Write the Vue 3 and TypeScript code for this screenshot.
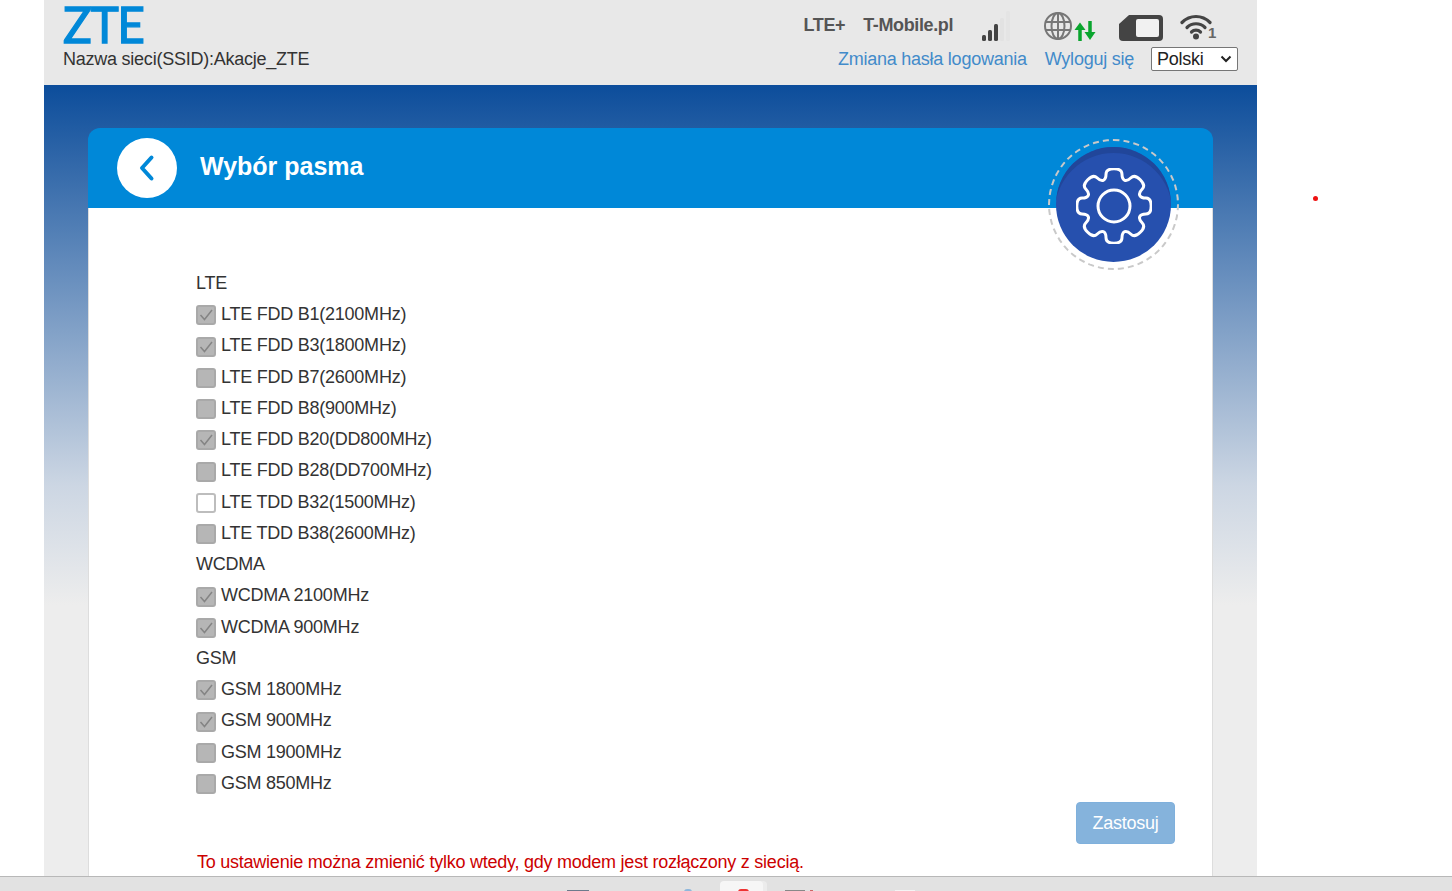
<script setup lang="ts">
interface Row { label: string; kind: 'head' | 'on' | 'off' | 'free' }
const rows: Row[] = [
  { label: 'LTE', kind: 'head' },
  { label: 'LTE FDD B1(2100MHz)', kind: 'on' },
  { label: 'LTE FDD B3(1800MHz)', kind: 'on' },
  { label: 'LTE FDD B7(2600MHz)', kind: 'off' },
  { label: 'LTE FDD B8(900MHz)', kind: 'off' },
  { label: 'LTE FDD B20(DD800MHz)', kind: 'on' },
  { label: 'LTE FDD B28(DD700MHz)', kind: 'off' },
  { label: 'LTE TDD B32(1500MHz)', kind: 'free' },
  { label: 'LTE TDD B38(2600MHz)', kind: 'off' },
  { label: 'WCDMA', kind: 'head' },
  { label: 'WCDMA 2100MHz', kind: 'on' },
  { label: 'WCDMA 900MHz', kind: 'on' },
  { label: 'GSM', kind: 'head' },
  { label: 'GSM 1800MHz', kind: 'on' },
  { label: 'GSM 900MHz', kind: 'on' },
  { label: 'GSM 1900MHz', kind: 'off' },
  { label: 'GSM 850MHz', kind: 'off' },
]

// Eight rounded teeth, one pointing straight up, smoothed through edge midpoints.
function gearPath(): string {
  const pts: [number, number][] = []
  for (let i = 0; i < 8; i++) {
    const a = -Math.PI / 2 + (i * Math.PI) / 4
    const add = (r: number, d: number) => pts.push([38 + r * Math.cos(a + d), 38 + r * Math.sin(a + d)])
    add(28, -0.29)
    add(38, -0.21)
    add(38, 0.21)
    add(28, 0.29)
  }
  const mid = (p: [number, number], q: [number, number]) => [(p[0] + q[0]) / 2, (p[1] + q[1]) / 2]
  const n = pts.length
  const start = mid(pts[n - 1], pts[0])
  let d = `M${start[0].toFixed(2)} ${start[1].toFixed(2)}`
  for (let i = 0; i < n; i++) {
    const m = mid(pts[i], pts[(i + 1) % n])
    d += `Q${pts[i][0].toFixed(2)} ${pts[i][1].toFixed(2)} ${m[0].toFixed(2)} ${m[1].toFixed(2)}`
  }
  return d + 'Z'
}
const gear = gearPath()
</script>

<template>
  <div class="page">
    <div class="shell">
      <header class="top">
        <div class="brand">
          <div class="logo">ZTE</div>
          <div class="ssid">Nazwa sieci(SSID):Akacje_ZTE</div>
        </div>
        <div class="status">
          <div class="status-line">
            <span class="net net-type">LTE+</span>
            <span class="net net-name">T-Mobile.pl</span>
            <svg class="ico-signal" width="32" height="32" viewBox="0 0 32 32">
              <rect x="1" y="24" width="4" height="6" rx="1.5" fill="#444" />
              <rect x="7" y="19" width="4" height="11" rx="1.5" fill="#444" />
              <rect x="13" y="13" width="4" height="17" rx="1.5" fill="#444" />
              <rect x="19" y="7" width="4" height="23" rx="1.5" fill="#e2e2e2" />
              <rect x="25" y="0" width="4" height="30" rx="1.5" fill="#e4e4e4" />
            </svg>
            <svg class="ico-globe" width="54" height="30" viewBox="0 0 54 30">
              <g fill="none" stroke="#777" stroke-width="2">
                <circle cx="15" cy="14" r="13" />
                <ellipse cx="15" cy="14" rx="6.5" ry="13" />
                <path d="M15 1v26M2.500 10h25M2.500 18h25" />
              </g>
              <path d="M37 29V15" fill="none" stroke="#0aa52e" stroke-width="3.500" />
              <path d="M31.500 18 37 10.500 42.500 18z" fill="#0aa52e" />
              <path d="M47 9v14" fill="none" stroke="#0aa52e" stroke-width="3.500" />
              <path d="M41.500 20 47 28 52.500 20z" fill="#0aa52e" />
            </svg>
            <svg class="ico-sim" width="46" height="28" viewBox="0 0 46 28">
              <path d="M11 1h30a4 4 0 0 1 4 4v18a4 4 0 0 1-4 4H5a4 4 0 0 1-4-4V10z" fill="#444" />
              <rect x="18" y="5" width="23" height="18" rx="2" fill="#f1f1f1" />
            </svg>
            <svg class="ico-wifi" width="38" height="28" viewBox="0 0 38 28">
              <g fill="none" stroke="#444" stroke-width="3.200" stroke-linecap="round">
                <path d="M2 9.500C10 1.500 22 1.500 30 9.500" />
                <path d="M7 14.500C12 9.500 20 9.500 25 14.500" />
                <path d="M11.500 19C14 16.500 18 16.500 20.500 19" />
              </g>
              <circle cx="16" cy="23.500" r="3" fill="#444" />
              <text x="28" y="25" class="wifi-count">1</text>
            </svg>
          </div>
          <div class="link-line">
            <a class="link link-first">Zmiana hasła logowania</a>
            <a class="link">Wyloguj się</a>
            <div class="lang">
              <span>Polski</span>
              <svg width="12" height="8" viewBox="0 0 12 8"><path d="M1.500 1.500 6 6l4.500-4.500" fill="none" stroke="#222" stroke-width="2" /></svg>
            </div>
          </div>
        </div>
      </header>

      <main class="stage">
        <section class="card">
          <div class="card-head">
            <div class="back">
              <svg width="18" height="28" viewBox="0 0 18 28"><path d="M13.500 3.500 4 14l9.500 10.500" fill="none" stroke="#0088d8" stroke-width="4" stroke-linecap="round" stroke-linejoin="round" /></svg>
            </div>
            <h1 class="title">Wybór pasma</h1>
          </div>
          <div class="badge">
            <div class="badge-disc">
              <svg class="gear" width="76" height="76" viewBox="0 0 76 76">
                <g fill="none" stroke="#fff" stroke-width="3" stroke-linejoin="round">
                  <path :d="gear" />
                  <circle cx="38" cy="38" r="16" />
                </g>
              </svg>
            </div>
          </div>
          <div class="card-body">
            <div class="bands">
              <div v-for="row in rows" :key="row.label" class="band">
                <span v-if="row.kind !== 'head'" class="box" :class="'box-' + row.kind">
                  <svg v-if="row.kind === 'on'" width="16" height="16" viewBox="0 0 16 16"><path d="M2.500 8 6.500 12.500 14 3" fill="none" stroke="#848484" stroke-width="1.500" /></svg>
                </span>
                <span>{{ row.label }}</span>
              </div>
            </div>
            <div class="actions"><button class="apply">Zastosuj</button></div>
            <p class="note">To ustawienie można zmienić tylko wtedy, gdy modem jest rozłączony z siecią.</p>
          </div>
        </section>
      </main>
    </div>
    <span class="dot"></span>
    <div class="taskbar">
      <span class="tb tb-a"></span>
      <span class="tb tb-b"></span>
      <span class="tb-tab"><i></i></span>
      <span class="tb tb-c"></span>
      <span class="tb tb-c2"></span>
      <span class="tb tb-d"></span>
    </div>
  </div>
</template>

<style>
html, body { margin: 0; background: #fff; }
</style>

<style scoped>
.page {
  position: relative;
  width: 1452px;
  height: 891px;
  overflow: hidden;
  background: #fff;
  font-family: "Liberation Sans", Arial, sans-serif;
  letter-spacing: -0.24px;
  color: #333;
}
.shell { width: 1213px; margin-left: 44px; }
.top {
  display: flex;
  justify-content: space-between;
  height: 85px;
  padding: 0 19px;
  box-sizing: border-box;
  background: #e8e8e8;
}
.logo {
  font-family: Lato, "Liberation Sans", sans-serif;
  font-weight: 400;
  font-size: 51px;
  line-height: 48px;
  height: 48px;
  color: #0088d8;
  -webkit-text-stroke: 1.3px #0088d8;
  letter-spacing: -1.5px;
  transform: scaleX(0.94);
  transform-origin: left center;
}
.ssid { font-size: 18px; line-height: 22px; color: #333; }
.status { display: flex; flex-direction: column; align-items: flex-end; }
.status-line {
  display: flex;
  align-items: center;
  height: 47px;
  padding-top: 5px;
  box-sizing: border-box;
  font-weight: 700;
  color: #555;
}
.net { font-size: 18px; letter-spacing: -0.38px; margin-bottom: 2px; }
.net-type { margin-right: 18px; }
.net-name { margin-right: 28px; }
.ico-signal { margin-right: 30px; margin-top: 2px; }
.ico-globe { margin-right: 21px; margin-top: 2px; }
.ico-sim { margin-right: 16px; margin-top: 3px; }
.ico-wifi { margin-right: 20px; margin-top: 2px; }
.wifi-count { font-size: 15px; font-weight: 700; fill: #666; font-family: "Liberation Sans", sans-serif; }
.link-line { display: flex; align-items: center; height: 24px; font-size: 18px; }
.link { color: #428bca; margin-right: 17px; }
.link-first { margin-right: 18px; }
.lang {
  display: flex;
  align-items: center;
  justify-content: space-between;
  width: 87px;
  height: 24px;
  box-sizing: border-box;
  padding: 0 5px;
  background: #fff;
  border: 1px solid #767676;
  border-radius: 2px;
  color: #222;
}
.stage {
  height: 806px;
  padding: 43px 44px 0;
  box-sizing: border-box;
  background: linear-gradient(#0c4d9b 0, #ccd6e3 400px, #ededed 520px, #ededed 100%);
}
.card { position: relative; }
.card-head {
  display: flex;
  align-items: center;
  height: 80px;
  padding-left: 29px;
  background: #0088d8;
  border-radius: 12px 12px 0 0;
}
.back {
  display: flex;
  align-items: center;
  justify-content: center;
  width: 60px;
  height: 60px;
  border-radius: 50%;
  background: #fff;
}
.title { margin: 0 0 4px 23px; font-size: 25px; font-weight: 700; letter-spacing: 0; color: #fff; }
.badge {
  position: absolute;
  top: 11px;
  right: 34px;
  width: 131px;
  height: 131px;
  box-sizing: border-box;
  border: 2px dashed #c9c9c9;
  border-radius: 50%;
  display: flex;
  align-items: center;
  justify-content: center;
}
.badge-disc {
  display: flex;
  align-items: center;
  justify-content: center;
  width: 115px;
  height: 115px;
  border-radius: 50%;
  background: #2650ae;
  box-shadow: inset 0 7px 0 -1px #21469a;
}
.gear { margin-top: 2px; }
.card-body {
  height: 668px;
  padding: 59.750px 37px 0 107px;
  box-sizing: border-box;
  background: #fff;
  border-left: 1px solid #ddd;
  border-right: 1px solid #ddd;
}
.band {
  display: flex;
  align-items: center;
  height: 31.25px;
  font-size: 18px;
  color: #333;
}
.box {
  display: flex;
  align-items: center;
  justify-content: center;
  flex: none;
  width: 20px;
  height: 20px;
  margin: 1.500px 5px 0 0;
  box-sizing: border-box;
  border: 2px solid #b4b4b4;
  border-radius: 3px;
}
.box-on, .box-off { background: #b6b6b6; border-color: #a9a9a9; }
.box-free { background: #fff; border-color: #bdbdbd; }
.actions { display: flex; justify-content: flex-end; margin-top: 3.250px; }
.apply {
  width: 99px;
  height: 42px;
  padding: 0;
  border: 1px solid #7fb0dc;
  border-radius: 4px;
  background: #85b3dc;
  color: #fff;
  font-family: inherit;
  font-size: 18px;
  letter-spacing: -0.25px;
}
.note { margin: 7px 0 0 1px; font-size: 18px; line-height: 22px; color: #c00; }
.dot {
  position: absolute;
  left: 1313px;
  top: 196px;
  width: 5px;
  height: 5px;
  border-radius: 50%;
  background: #e11;
}
.taskbar {
  position: absolute;
  left: 0;
  right: 0;
  bottom: 0;
  height: 15px;
  box-sizing: border-box;
  background: #e2e2e2;
  border-top: 1px solid #b8b8b8;
}
.tb { position: absolute; top: 13px; height: 2px; }
.tb-a { left: 567px; width: 22px; background: #6d7a8c; }
.tb-b { left: 684px; top: 12px; width: 8px; height: 3px; border-radius: 4px 4px 0 0; background: #8fb7dc; }
.tb-c { left: 785px; width: 20px; background: #888; }
.tb-c2 { left: 810px; width: 3px; background: #c66; }
.tb-d { left: 895px; width: 20px; background: #f4f4f4; }
.tb-tab {
  position: absolute;
  left: 720px;
  top: 4px;
  width: 43px;
  height: 11px;
  background: #f6f6f6;
  border-radius: 4px 4px 0 0;
  box-shadow: 4px 0 0 #ececec;
}
.tb-tab i {
  position: absolute;
  left: 18px;
  top: 8px;
  width: 11px;
  height: 3px;
  border-radius: 6px 6px 0 0;
  background: #e33;
}
</style>
